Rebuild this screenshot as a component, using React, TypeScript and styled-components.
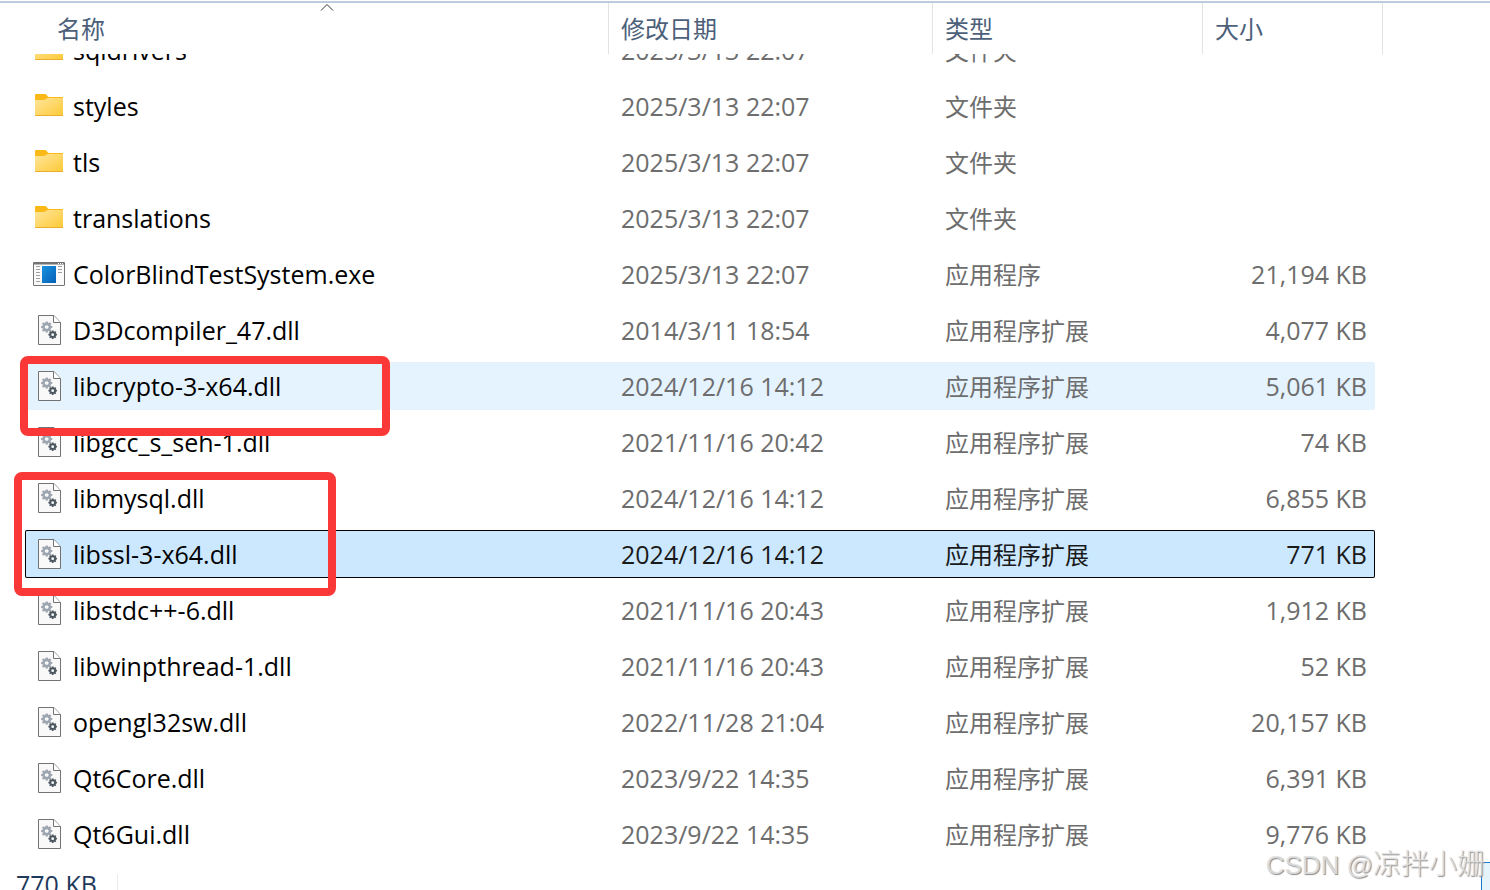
import React from "react";
import styled, { createGlobalStyle, css } from "styled-components";

const GlobalStyle = createGlobalStyle`
  *, *::before, *::after { box-sizing: border-box; }
  body {
    margin: 0;
    background: #fff;
    font-family: "Open Sans", "Noto Sans CJK SC", sans-serif;
    font-size: 25px;
    color: #000;
  }
`;

const Window = styled.main`
  position: relative;
  display: flex;
  flex-direction: column;
  height: 100vh;
  padding-top: 1px;
  overflow: hidden;
`;

const ListPane = styled.section`
  flex: 1;
  min-height: 0;
  overflow: hidden;
  border-top: 2px solid #bccbdd;
`;

const FileTable = styled.table`
  display: block;
  width: calc(100% - 107px);
`;

const TableHead = styled.thead`
  position: relative;
  z-index: 3;
  display: block;
  background: #fff;
`;

const HeadRow = styled.tr`
  display: grid;
  grid-template-columns: minmax(0, 1fr) 324px 270px 180px;
  height: 51px;
`;

const HeadCell = styled.th<{ $first?: boolean }>`
  display: flex;
  padding: 0 0 0 ${(p) => (p.$first ? 45 : 0)}px;
  border-right: 1px solid #e3e3e3;
  font-weight: 400;
`;

const SortButton = styled.button`
  position: relative;
  flex: 1;
  padding: 0 12px 2px;
  border: 0;
  background: none;
  color: #4c607a;
  font: 24px/32px "Noto Sans CJK SC", sans-serif;
  text-align: left;
`;

const SortMark = styled.svg`
  position: absolute;
  top: 0;
  left: 50%;
  width: 14px;
  height: 10px;
  margin-left: -7px;
`;

const TableBody = styled.tbody`
  display: flex;
  flex-direction: column;
  gap: 8px;
  margin: -28px 8px 0 25px;
`;

type RowState = "hover" | "selected" | undefined;

const Row = styled.tr<{ $state: RowState }>`
  display: grid;
  grid-template-columns: minmax(0, 1fr) 324px 270px 172px;
  align-items: center;
  height: 48px;
  border-radius: 2px;
  color: #6d6d6d;
  ${(p) => p.$state === "hover" && css`background: #e5f3ff;`}
  ${(p) =>
    p.$state === "selected" &&
    css`
      background: #cce8ff;
      box-shadow: inset 0 0 0 1px #000;
      color: #1a1a1a;
    `}
`;

const Cell = styled.td`
  padding: 0 12px;
  line-height: 36px;
  white-space: nowrap;
`;

const NameCell = styled(Cell)`
  position: relative;
  display: flex;
  align-items: center;
  gap: 8px;
  height: 48px;
  padding: 0 8px;
  color: #000;
`;

const TypeCell = styled(Cell)`
  font-family: "Noto Sans CJK SC", sans-serif;
  font-size: 24px;
`;

const SizeCell = styled(Cell)`
  padding: 0 8px;
  text-align: right;
`;

const Marker = styled.span<{ $size: "single" | "double" }>`
  position: absolute;
  z-index: 2;
  border: 8px solid #fb3838;
  border-radius: 8px;
  pointer-events: none;
  ${(p) =>
    p.$size === "single"
      ? css`top: -6px; left: -5px; width: 370px; height: 80px;`
      : css`top: -2px; left: -11px; width: 322px; height: 124px;`}
`;

const Icon = styled.svg`
  flex: none;
  width: 32px;
  height: 32px;
`;

const StatusBar = styled.footer`
  display: flex;
  justify-content: space-between;
  align-items: flex-start;
  height: 28px;
  background: #fff;
`;

const StatusText = styled.span`
  margin-top: 12px;
  padding: 0 20px 0 16px;
  border-right: 1px solid #ececec;
  color: #1e395b;
  line-height: 20px;
`;

const ViewButton = styled.button`
  width: 9px;
  height: 40px;
  padding: 0;
  border: 1px solid #1979ca;
  border-right: 0;
  background: #e5f3fb;
`;

const Watermark = styled.div`
  position: absolute;
  z-index: 4;
  right: 5px;
  bottom: 4px;
  color: rgba(225, 225, 225, 0.9);
  font: 26px/42px "Liberation Sans", sans-serif;
  text-shadow: 1px 1px 1px #8c8c8c;
  white-space: nowrap;
`;

const Author = styled.span`
  font: 300 28px/42px "Noto Sans CJK SC", sans-serif;
`;

const FolderIcon = () => (
  <Icon viewBox="0 0 32 32" aria-hidden="true">
    <defs>
      <linearGradient id="folder" x1="0" y1="0" x2="1" y2="1">
        <stop offset="0" stopColor="#ffe69c" />
        <stop offset="1" stopColor="#fdc936" />
      </linearGradient>
    </defs>
    <path d="M2 5a1 1 0 0 1 1-1h9c2 0 2.500 3 4 3h13a1 1 0 0 1 1 1v6H2z" fill="#fbb917" />
    <path d="M2 10h9c2 0 2-2 4-2h15v17a1 1 0 0 1-1 1H3a1 1 0 0 1-1-1z" fill="url(#folder)" />
    <path d="M2 25.500h28" stroke="#e9ae2b" />
  </Icon>
);

const ExeIcon = () => (
  <Icon viewBox="0 0 32 32" aria-hidden="true">
    <defs>
      <linearGradient id="exe" x1="0" y1="0" x2="1" y2="1">
        <stop offset="0" stopColor="#1a92e0" />
        <stop offset="1" stopColor="#0560b5" />
      </linearGradient>
    </defs>
    <rect x="0.500" y="4.500" width="31" height="23" rx="0.500" fill="#fafafa" stroke="#737373" />
    <path d="M0 5.500h32" stroke="#737373" strokeWidth="2" />
    <path d="M25 5.500h1M27 5.500h1M29 5.500h1" stroke="#fff" />
    <rect x="9" y="8" width="14" height="17" fill="url(#exe)" />
    <path
      d="M3 8.500h4M3 11.500h4M3 14.500h4M3 17.500h4M3 20.500h4M3 23.500h4M25 8.500h4M25 11.500h4M25 14.500h4"
      stroke="#a0a0a0"
    />
  </Icon>
);

const Gear = ({ x, y, r, color }: { x: number; y: number; r: number; color: string }) => (
  <g transform={`translate(${x} ${y})`} stroke={color} fill="none">
    <circle r={r * 0.56} strokeWidth={r * 0.46} />
    {[0, 45, 90, 135].map((a) => (
      <path
        key={a}
        transform={`rotate(${a})`}
        d={`M${-r} 0H${-r * 0.6}M${r * 0.6} 0H${r}`}
        strokeWidth={r * 0.4}
      />
    ))}
  </g>
);

const DllIcon = () => (
  <Icon viewBox="0 0 32 32" aria-hidden="true">
    <path d="M5.500 1.500h15.500l6.500 7v22h-22z" fill="#f9f9f9" stroke="#737373" />
    <path d="M20.500 1.500v7h7" fill="#fff" stroke="#737373" />
    <Gear x={13.7} y={13} r={5.600} color="#9ea6b0" />
    <Gear x={19.7} y={20.7} r={4.300} color="#4c565e" />
  </Icon>
);

const icons = { folder: FolderIcon, exe: ExeIcon, dll: DllIcon };
const types = { folder: "文件夹", exe: "应用程序", dll: "应用程序扩展" };

interface FileEntry {
  kind: keyof typeof icons;
  name: string;
  date: string;
  size?: string;
  state?: RowState;
  marker?: "single" | "double";
}

const files: FileEntry[] = [
  { kind: "folder", name: "sqldrivers", date: "2025/3/13 22:07" },
  { kind: "folder", name: "styles", date: "2025/3/13 22:07" },
  { kind: "folder", name: "tls", date: "2025/3/13 22:07" },
  { kind: "folder", name: "translations", date: "2025/3/13 22:07" },
  { kind: "exe", name: "ColorBlindTestSystem.exe", date: "2025/3/13 22:07", size: "21,194 KB" },
  { kind: "dll", name: "D3Dcompiler_47.dll", date: "2014/3/11 18:54", size: "4,077 KB" },
  { kind: "dll", name: "libcrypto-3-x64.dll", date: "2024/12/16 14:12", size: "5,061 KB", state: "hover", marker: "single" },
  { kind: "dll", name: "libgcc_s_seh-1.dll", date: "2021/11/16 20:42", size: "74 KB" },
  { kind: "dll", name: "libmysql.dll", date: "2024/12/16 14:12", size: "6,855 KB", marker: "double" },
  { kind: "dll", name: "libssl-3-x64.dll", date: "2024/12/16 14:12", size: "771 KB", state: "selected" },
  { kind: "dll", name: "libstdc++-6.dll", date: "2021/11/16 20:43", size: "1,912 KB" },
  { kind: "dll", name: "libwinpthread-1.dll", date: "2021/11/16 20:43", size: "52 KB" },
  { kind: "dll", name: "opengl32sw.dll", date: "2022/11/28 21:04", size: "20,157 KB" },
  { kind: "dll", name: "Qt6Core.dll", date: "2023/9/22 14:35", size: "6,391 KB" },
  { kind: "dll", name: "Qt6Gui.dll", date: "2023/9/22 14:35", size: "9,776 KB" },
];

const columns = ["名称", "修改日期", "类型", "大小"];

export default function App() {
  return (
    <Window>
      <GlobalStyle />
      <ListPane>
        <FileTable>
          <TableHead>
            <HeadRow>
              {columns.map((label, i) => (
                <HeadCell key={label} scope="col" $first={i === 0}>
                  <SortButton type="button">
                    {label}
                    {i === 0 && (
                      <SortMark viewBox="0 0 14 10" aria-hidden="true">
                        <path d="M1 7.500 7 1.500 13 7.500" fill="none" stroke="#333" />
                      </SortMark>
                    )}
                  </SortButton>
                </HeadCell>
              ))}
            </HeadRow>
          </TableHead>
          <TableBody>
            {files.map((file) => {
              const FileIcon = icons[file.kind];
              return (
                <Row key={file.name} $state={file.state}>
                  <NameCell>
                    <FileIcon />
                    <span>{file.name}</span>
                    {file.marker && <Marker $size={file.marker} />}
                  </NameCell>
                  <Cell>{file.date}</Cell>
                  <TypeCell>{types[file.kind]}</TypeCell>
                  <SizeCell>{file.size}</SizeCell>
                </Row>
              );
            })}
          </TableBody>
        </FileTable>
      </ListPane>
      <StatusBar>
        <StatusText>770 KB</StatusText>
        <ViewButton type="button" aria-label="详细信息" />
      </StatusBar>
      <Watermark>
        CSDN @<Author>凉拌小姗</Author>
      </Watermark>
    </Window>
  );
}
